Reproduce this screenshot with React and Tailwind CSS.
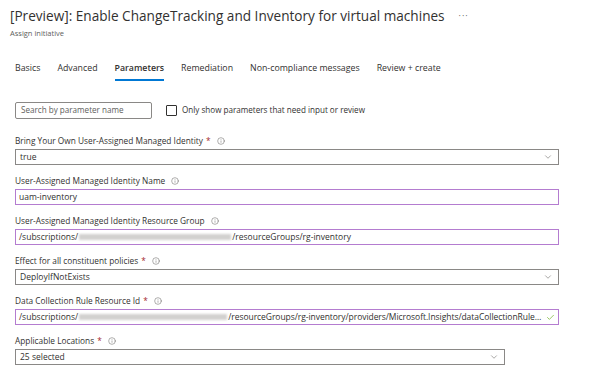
import { ChevronDown, Check, Info } from 'lucide-react';

const font = { fontFamily: '"Open Sans", "Noto Sans", sans-serif' };

const tabs = ['Basics', 'Advanced', 'Parameters', 'Remediation', 'Non-compliance messages', 'Review + create'];

function Label({ text, required }) {
  return (
    <div className="flex items-center h-[12px] text-[8.3px] leading-[12px] text-[#323130]">
      <span>{text}</span>
      {required && <span className="ml-[3px] text-[#a4262c]">*</span>}
      <Info className="ml-[6px] w-[8px] h-[8px] text-[#605e5c]" strokeWidth={1.5} />
    </div>
  );
}

function Blurred({ w }) {
  return (
    <span
      className="inline-block h-[6px] mx-[1px] bg-[#c8c6c4] blur-[1px] opacity-80 shrink-0"
      style={{ width: w }}
    />
  );
}

function Select({ value, width = 'w-[544px]' }) {
  return (
    <div className={`${width} h-[16px] mt-[2px] border border-[#8a8886] flex items-center justify-between pl-[4px] pr-[5px] text-[8.5px] text-[#323130]`}>
      <span>{value}</span>
      <ChevronDown className="w-[10px] h-[10px] text-[#605e5c]" strokeWidth={1.3} />
    </div>
  );
}

function Field({ children, check }) {
  return (
    <div className="w-[544px] h-[16px] mt-[2px] border border-[#b47cd0] flex items-center pl-[3px] pr-[3px] text-[8.5px] text-[#323130] whitespace-nowrap">
      <span className="flex items-center flex-1 min-w-0">{children}</span>
      {check && <Check className="ml-[1px] w-[9px] h-[9px] text-[#57a300] shrink-0" strokeWidth={1.6} />}
    </div>
  );
}

export default function App() {
  return (
    <div className="w-[600px] h-[386px] bg-white overflow-hidden" style={font}>
      <div className="pl-[10px] pt-[5px] flex items-center">
        <h1 className="text-[13.6px] leading-[22px] text-[#323130]">
          [Preview]: Enable ChangeTracking and Inventory for virtual machines
        </h1>
        <span className="ml-[14px] text-[9px] text-[#605e5c] tracking-[1px]">···</span>
      </div>
      <div className="pl-[10px] mt-[1px] text-[7.5px] leading-[10px] text-[#605e5c]">Assign initiative</div>

      <div className="flex pl-[15px] mt-[23px] gap-[17px] text-[8.8px] text-[#323130]">
        {tabs.map((t) => (
          <div
            key={t}
            className={`h-[20px] pt-[1px] ${t === 'Parameters' ? 'font-semibold border-b-2 border-[#0078d4]' : ''}`}
          >
            {t}
          </div>
        ))}
      </div>

      <div className="flex items-center pl-[15px] mt-[21px]">
        <div className="w-[137px] h-[17px] border border-[#8a8886] rounded-[2px] flex items-center pl-[5px] text-[8.1px] text-[#605e5c]">
          Search by parameter name
        </div>
        <div className="ml-[14px] w-[11px] h-[11px] border border-[#323130] rounded-[1px]" />
        <span className="ml-[5px] text-[8.1px] text-[#323130]">Only show parameters that need input or review</span>
      </div>

      <div className="pl-[15px] mt-[16px] flex flex-col">
        <Label text="Bring Your Own User-Assigned Managed Identity" required />
        <Select value="true" />

        <div className="mt-[10px]" />
        <Label text="User-Assigned Managed Identity Name" />
        <Field>uam-inventory</Field>

        <div className="mt-[10px]" />
        <Label text="User-Assigned Managed Identity Resource Group" />
        <Field>
          /subscriptions/
          <Blurred w={152} />
          /resourceGroups/rg-inventory
        </Field>

        <div className="mt-[10px]" />
        <Label text="Effect for all constituent policies" required />
        <Select value="DeployIfNotExists" />

        <div className="mt-[10px]" />
        <Label text="Data Collection Rule Resource Id" required />
        <Field check>
          /subscriptions/
          <Blurred w={148} />
          <span className="tracking-[-0.05px]">/resourceGroups/rg-inventory/providers/Microsoft.Insights/dataCollectionRule…</span>
        </Field>

        <div className="mt-[10px]" />
        <Label text="Applicable Locations" required />
        <Select value="25 selected" width="w-[490px]" />
      </div>
    </div>
  );
}
